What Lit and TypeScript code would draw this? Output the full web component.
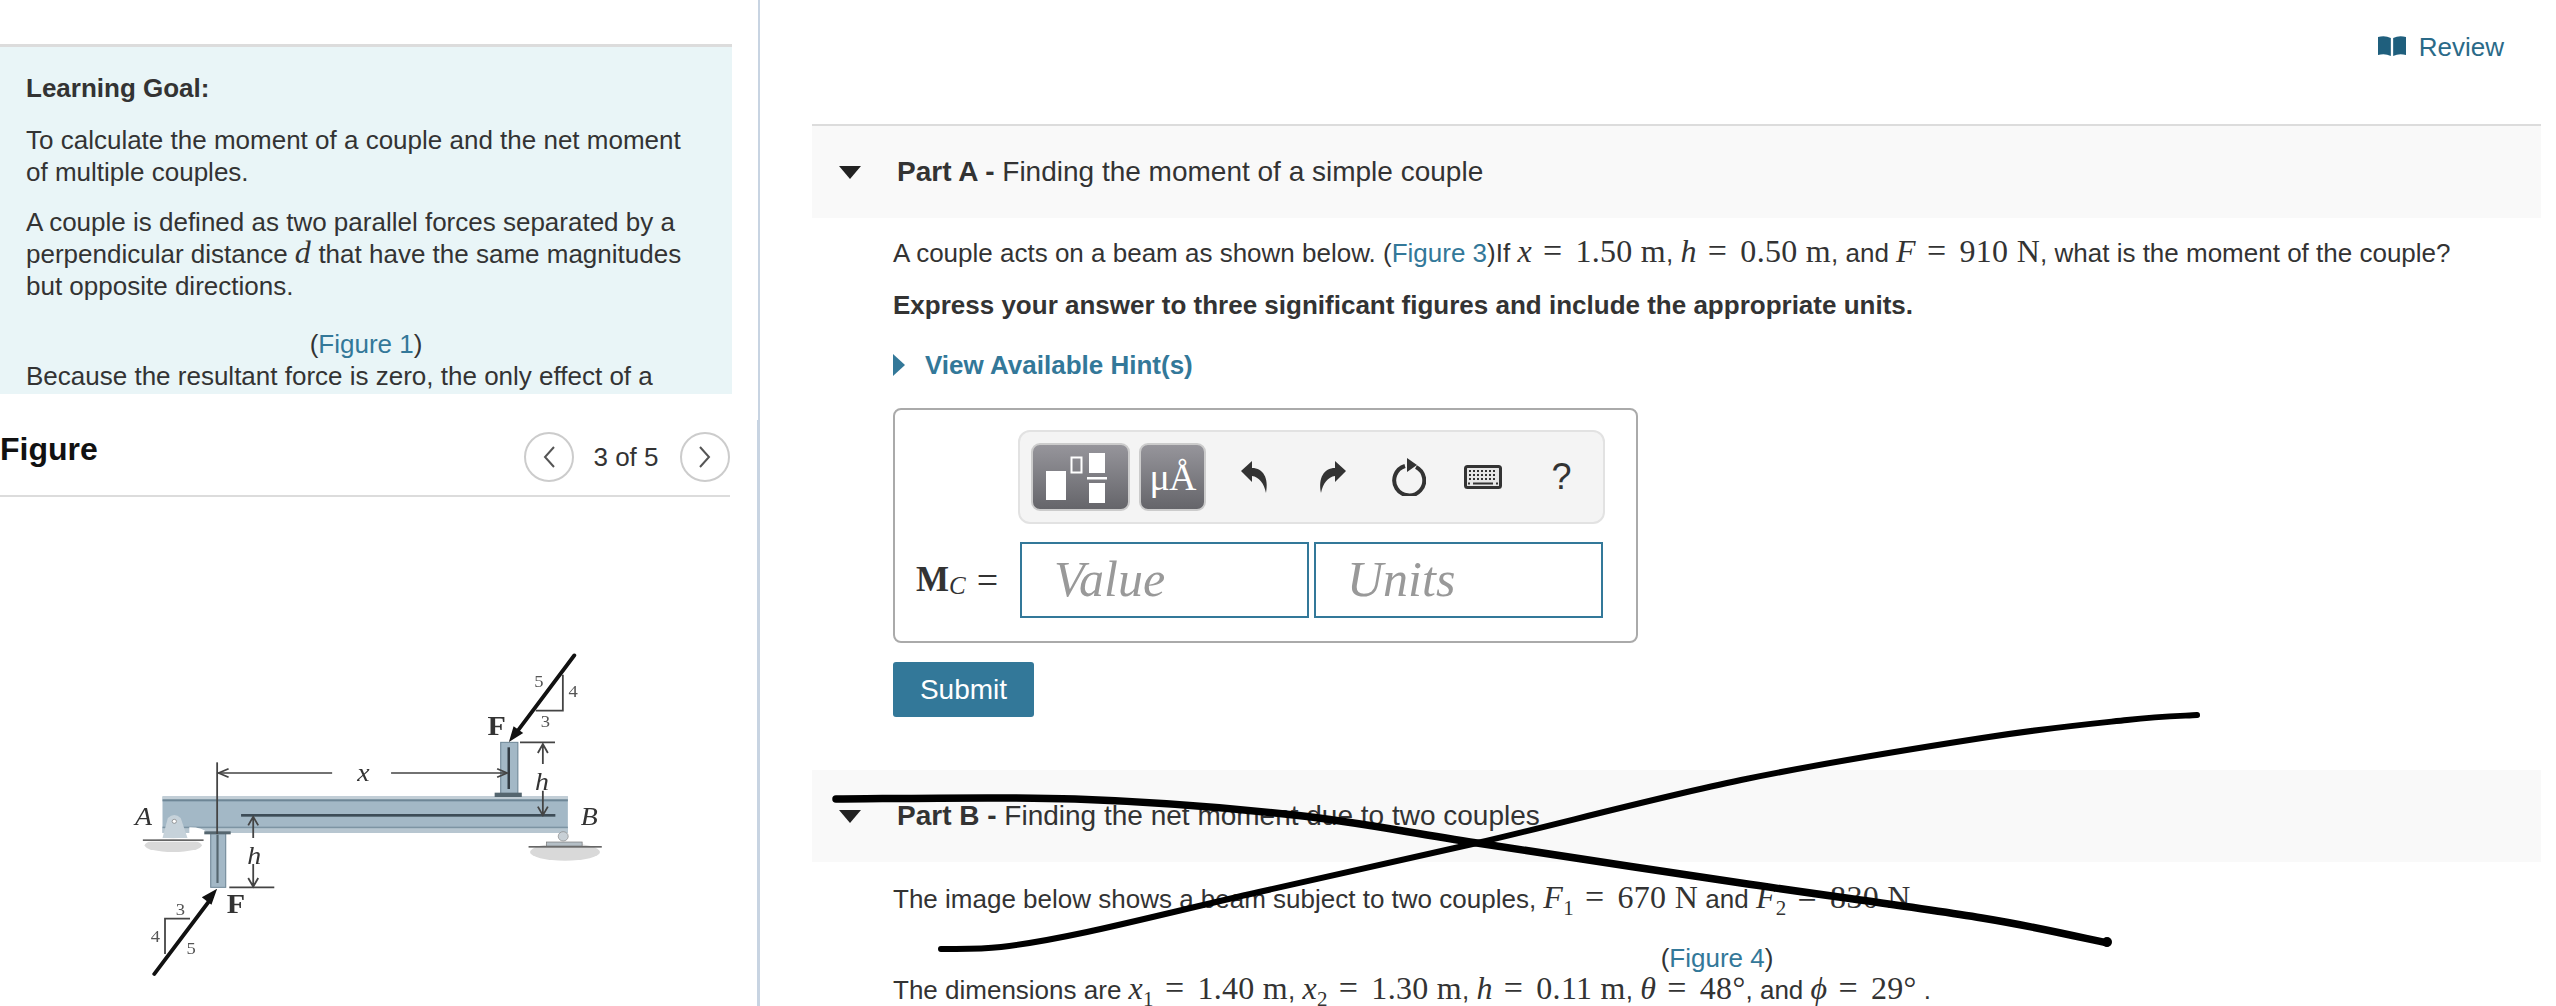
import { LitElement, html, css, svg } from "lit";
import { customElement } from "lit/decorators.js";

type P = [number, number];

function smooth(pts: P[]): string {
  let d = `M${pts[0][0]} ${pts[0][1]}`;
  for (let i = 0; i < pts.length - 1; i++) {
    const p0 = pts[Math.max(0, i - 1)];
    const p1 = pts[i];
    const p2 = pts[i + 1];
    const p3 = pts[Math.min(pts.length - 1, i + 2)];
    const c1x = p1[0] + (p2[0] - p0[0]) / 6;
    const c1y = p1[1] + (p2[1] - p0[1]) / 6;
    const c2x = p2[0] - (p3[0] - p1[0]) / 6;
    const c2y = p2[1] - (p3[1] - p1[1]) / 6;
    d += ` C${c1x} ${c1y} ${c2x} ${c2y} ${p2[0]} ${p2[1]}`;
  }
  return d;
}

const strokeA: P[] = [[836, 799], [1075, 799], [1294, 815], [1477, 843], [1741, 883], [1982, 918], [2107, 943]];
const strokeB: P[] = [[941, 949], [1001, 947], [1087, 932], [1259, 892], [1477, 843], [1741, 780], [1982, 738], [2127, 720], [2197, 715]];

const m = (s: string) => html`<span class="m">${s}</span>`;
const v = (s: string) => html`<i class="m">${s}</i>`;
const eq = html`<span class="m eq">=</span>`;

const diagram = svg`
  <ellipse cx="205" cy="682" rx="80" ry="20" fill="#d9d9d9"/>
  <ellipse cx="1302" cy="702" rx="98" ry="26" fill="#d9d9d9"/>
  <rect x="120" y="665" width="170" height="6" fill="#fff"/>
  <rect x="175" y="535" width="1135" height="110" fill="#a3b8c6"/>
  <rect x="175" y="535" width="1135" height="9" fill="#c2ced6"/>
  <rect x="175" y="544" width="1135" height="6" fill="#6e8696"/>
  <rect x="175" y="626" width="1135" height="5" fill="#7d94a3"/>
  <rect x="175" y="631" width="1135" height="14" fill="#b7c6d0"/>
  <path d="M175 660 L190 600 Q208 582 226 600 L245 660 Z" fill="#c6d2da"/>
  <circle cx="208" cy="610" r="6" fill="#fff" stroke="#777" stroke-width="2"/>
  <path d="M250 628 Q290 628 300 645 L250 645 Z" fill="#fff"/>
  <rect x="120" y="664" width="170" height="5" fill="#666"/>
  <rect x="1200" y="684" width="205" height="5" fill="#666"/>
  <rect x="1250" y="672" width="100" height="12" fill="#b5bfc6" stroke="#777" stroke-width="2"/>
  <circle cx="1297" cy="655" r="14" fill="#c8d0d6" stroke="#888" stroke-width="2"/>
  <rect x="395" y="588" width="880" height="8" fill="#3d4c57"/>
  <rect x="1122" y="373" width="48" height="155" fill="#a3b8c6" stroke="#6e8696" stroke-width="3"/>
  <rect x="1141" y="388" width="7" height="125" fill="#333c44"/>
  <rect x="1105" y="524" width="76" height="13" fill="#55666f"/>
  <rect x="310" y="645" width="42" height="163" fill="#a3b8c6" stroke="#6e8696" stroke-width="3"/>
  <rect x="326" y="650" width="6" height="145" fill="#55666f"/>
  <rect x="292" y="640" width="74" height="9" fill="#55666f"/>
  <g stroke="#444" stroke-width="5" fill="none">
    <path d="M328 433 V648"/>
    <path d="M330 465 H650 M815 465 H1140"/>
    <path d="M360 452 L332 465 L360 478 M1112 452 L1140 465 L1112 478"/>
    <path d="M1176 373 H1274 M362 808 H488"/>
    <path d="M1240 378 V438 M1240 518 V592 M1226 405 L1240 378 L1254 405 M1226 566 L1240 592 L1254 566"/>
    <path d="M429 596 V660 M429 738 V806 M415 622 L429 596 L443 622 M415 780 L429 806 L443 780"/>
    <path d="M1296 170 V278 H1220 M252 902 H182 V1008"/>
  </g>
  <g stroke="#111" stroke-width="11" fill="none" stroke-linecap="round">
    <path d="M1328 112 L1165 345"/>
    <path d="M152 1068 L305 850"/>
  </g>
  <path d="M1145 372 L1158 325 L1185 345 Z M328 812 L285 838 L312 860 Z" fill="#111"/>
  <g font-family="'Liberation Serif', serif" fill="#333">
    <text x="98" y="622" font-size="78" font-style="italic">A</text>
    <text x="1346" y="622" font-size="78" font-style="italic">B</text>
    <text x="720" y="488" font-size="78" font-style="italic">x</text>
    <text x="1218" y="516" font-size="78" font-style="italic">h</text>
    <text x="412" y="738" font-size="78" font-style="italic">h</text>
    <text x="1085" y="352" font-size="84" font-weight="700">F</text>
    <text x="355" y="886" font-size="84" font-weight="700">F</text>
    <text x="1216" y="206" font-size="52" fill="#555">5</text>
    <text x="1312" y="236" font-size="52" fill="#555">4</text>
    <text x="1234" y="328" font-size="52" fill="#555">3</text>
    <text x="212" y="892" font-size="52" fill="#555">3</text>
    <text x="142" y="972" font-size="52" fill="#555">4</text>
    <text x="242" y="1008" font-size="52" fill="#555">5</text>
  </g>
`;

@customElement("app-root")
export class AppRoot extends LitElement {
  static styles = css`
    :host {
      display: block;
      position: relative;
      width: 2556px;
      height: 1006px;
      overflow: hidden;
      background: #fff;
      font-family: "Liberation Sans", Arial, sans-serif;
      font-size: 26px;
      line-height: 32px;
      color: #333;
    }
    .page { display: flex; height: 1006px; }
    .left { width: 760px; flex: none; box-sizing: border-box; padding-top: 44px; position: relative; }
    .divider-top, .divider-bottom { position: absolute; right: 0; background: #c8d4e2; }
    .divider-top { top: 0; height: 420px; width: 2px; }
    .divider-bottom { top: 420px; bottom: 0; width: 3px; }
    .goal {
      width: 732px; height: 350px; box-sizing: border-box; overflow: hidden;
      border-top: 3px solid #dcdcdc; background: #e9f5f7; padding: 25px 26px 0;
    }
    .goal p { margin: 0 0 18px; }
    .goal .title { font-weight: 700; margin-bottom: 20px; }
    .goal .center { text-align: center; margin: 26px 0 0; }
    a { color: #337899; text-decoration: none; }
    .fig-head {
      width: 730px; height: 66px; margin-top: 37px; box-sizing: border-box;
      border-bottom: 2px solid #dcdcdc; display: flex; align-items: flex-start; justify-content: space-between;
    }
    .fig-title { font-size: 32px; font-weight: 700; color: #111; line-height: 36px; }
    .nav { display: flex; align-items: center; height: 50px; margin-top: 1px; }
    .circle {
      width: 50px; height: 50px; box-sizing: border-box; border: 2px solid #ccc; border-radius: 50%;
      display: flex; align-items: center; justify-content: center;
    }
    .count { width: 106px; text-align: center; padding-right: 2px; box-sizing: border-box; }
    .figure { padding: 121px 0 0 100px; }
    .figure svg { display: block; width: 560px; height: 386px; filter: blur(0.7px); }

    .right { flex: 1; padding: 0 15px 0 52px; min-width: 0; }
    .review {
      height: 124px; box-sizing: border-box; padding: 31px 37px 0 0; color: #2a6a88;
      display: flex; justify-content: flex-end; align-items: flex-start; gap: 13px;
    }
    .review svg { margin-top: 5px; }
    .part-head {
      background: #f9f9f9; height: 92px; box-sizing: border-box; padding: 0 0 0 27px;
      display: flex; align-items: center; gap: 36px; color: #333; font-size: 28px;
    }
    .part-head.first { border-top: 2px solid #dcdcdc; height: 94px; }
    .part-head b { font-weight: 700; }
    .body { padding-left: 81px; }
    .body p { margin: 0; white-space: nowrap; }
    .q { padding-top: 19px; }
    .q.second { padding-top: 21px; }
    .bold { font-weight: 700; margin-top: 20px !important; }
    .hint { margin-top: 28px !important; display: flex; align-items: center; gap: 20px; color: #337899; font-weight: 700; }
    .m { font-family: "Liberation Serif", "Times New Roman", serif; font-size: 32px; line-height: 0; letter-spacing: 0.3px; }
    .eq { margin: 0 13px 0 11px; font-size: 34px; }
    .m sub { font-size: 21px; line-height: 0; }
    .answer {
      margin-top: 27px; width: 745px; height: 235px; box-sizing: border-box;
      border: 2px solid #aaa; border-radius: 8px; padding: 20px 0 0 21px;
      display: grid; grid-template-columns: 102px 585px; grid-template-rows: 94px 76px; row-gap: 18px;
    }
    .toolbar {
      grid-column: 2; height: 94px; box-sizing: border-box; width: 587px;
      background: #f4f4f4; border: 2px solid #e2e2e2; border-radius: 12px;
      display: flex; align-items: center; padding: 0 0 0 11px;
    }
    .btn {
      height: 68px; box-sizing: border-box; border: 2px solid #ccc; border-radius: 9px;
      background: linear-gradient(#96959b, #65656a); display: flex; align-items: center; justify-content: center;
      color: #fff; font-family: "Liberation Serif", serif; font-size: 38px;
    }
    .btn.tpl { width: 99px; padding-right: 4px; }
    .btn.unit { width: 67px; margin-left: 9px; letter-spacing: -1px; }
    .tool { width: 77px; display: flex; justify-content: center; align-items: center; color: #333; }
    .tool.first { margin-left: 10px; }
    .tool.keys { margin-left: -3px; margin-right: 2px; }
    .qm { font-size: 36px; font-family: "Liberation Sans", sans-serif; }
    .label { display: flex; align-items: center; font-family: "Liberation Serif", serif; font-size: 35px; }
    .label b { font-weight: 700; }
    .label i { font-size: 25px; margin-top: 12px; }
    .label span { margin-left: 11px; font-size: 38px; }
    .inputs { display: flex; gap: 5px; margin-left: 2px; }
    .input {
      width: 290px; height: 76px; box-sizing: border-box; border: 2px solid #337899;
      font-family: "Liberation Serif", serif; font-style: italic; font-size: 50px; color: #999;
      line-height: 70px; padding-left: 32px;
    }
    .input.units { padding-left: 31px; }
    .submit {
      display: block; margin-top: 19px; width: 141px; height: 55px; background: #337899; color: #fff;
      border-radius: 3px; text-align: center; line-height: 56px; font-size: 28px;
    }
    .gap { height: 53px; }
    .fig4 { text-align: center; width: 100%; padding-right: 32px; margin-top: 27px !important; }
    .scribble { position: absolute; left: 0; top: 0; pointer-events: none; }
  `;

  render() {
    return html`
      <div class="page">
        <section class="left">
          <div class="divider-top"></div>
          <div class="divider-bottom"></div>
          <div class="goal">
            <p class="title">Learning Goal:</p>
            <p>To calculate the moment of a couple and the net moment of multiple couples.</p>
            <p>A couple is defined as two parallel forces separated by a perpendicular distance ${v("d")} that have the same magnitudes but opposite directions.</p>
            <p class="center">(<a>Figure 1</a>)</p>
            <p>Because the resultant force is zero, the only effect of a</p>
          </div>
          <div class="fig-head">
            <div class="fig-title">Figure</div>
            <div class="nav">
              <div class="circle"><svg width="14" height="24" viewBox="0 0 14 24"><path d="M12 2 L3 12 L12 22" fill="none" stroke="#555" stroke-width="2"/></svg></div>
              <div class="count">3 of 5</div>
              <div class="circle"><svg width="14" height="24" viewBox="0 0 14 24"><path d="M2 2 L11 12 L2 22" fill="none" stroke="#555" stroke-width="2"/></svg></div>
            </div>
          </div>
          <div class="figure">
            <svg viewBox="0 0 1568 1158" preserveAspectRatio="none">${diagram}</svg>
          </div>
        </section>
        <section class="right">
          <div class="review">
            <svg width="28" height="20" viewBox="0 0 24 20" preserveAspectRatio="none"><path d="M0 1 Q6 -1 11 2 V20 Q6 17 0 19 Z M13 2 Q18 -1 24 1 V19 Q18 17 13 20 Z" fill="#1f5f7d"/></svg>
            <span>Review</span>
          </div>
          <div class="part-head first">
            <svg width="22" height="13" viewBox="0 0 22 13"><path d="M0 0 H22 L11 13 Z" fill="#222"/></svg>
            <span><b>Part A -</b> Finding the moment of a simple couple</span>
          </div>
          <div class="body">
            <p class="q">A couple acts on a beam as shown below. (<a>Figure 3</a>)If ${v("x")}${eq}${m("1.50 m")}, ${v("h")}${eq}${m("0.50 m")}, and ${v("F")}${eq}${m("910 N")}, what is the moment of the couple?</p>
            <p class="bold">Express your answer to three significant figures and include the appropriate units.</p>
            <p class="hint"><svg width="12" height="22" viewBox="0 0 12 22"><path d="M0 0 L12 11 L0 22 Z" fill="#337899"/></svg><span>View Available Hint(s)</span></p>
            <div class="answer">
              <div class="toolbar">
                <div class="btn tpl">
                  <svg width="66" height="52" viewBox="0 0 66 52" fill="#fff"><rect x="0" y="20" width="20" height="29"/><rect x="25.5" y="6.5" width="10" height="15" fill="none" stroke="#fff" stroke-width="2"/><rect x="43" y="2" width="16" height="20"/><rect x="41" y="26" width="20" height="2.5"/><rect x="43" y="32" width="16" height="20"/></svg>
                </div>
                <div class="btn unit">μÅ</div>
                <div class="tool first"><svg width="28" height="32" viewBox="0 0 28 32"><path d="M0 10 L11 0 V7 C22 7 28 17 25 32 C23 22 18 16 11 15 V21 Z" fill="#333"/></svg></div>
                <div class="tool"><svg width="28" height="32" viewBox="0 0 28 32"><path d="M28 10 L17 0 V7 C6 7 0 17 3 32 C5 22 10 16 17 15 V21 Z" fill="#333"/></svg></div>
                <div class="tool"><svg width="34" height="38" viewBox="0 0 34 38"><path d="M13 8 A15 15 0 1 0 24 9" fill="none" stroke="#333" stroke-width="4"/><path d="M15 0 L25 7 L15 14 Z" fill="#333"/></svg></div>
                <div class="tool keys"><svg width="38" height="24" viewBox="0 0 38 24"><rect x="1.5" y="1.5" width="35" height="21" rx="2" fill="#e6e6e6" stroke="#333" stroke-width="3"/><g fill="none" stroke="#333" stroke-width="2" stroke-dasharray="2 2"><path d="M5 6 H33 M5 10 H33 M5 14 H33"/></g><path d="M9 18.5 H29 M4 18.5 H6 M32 18.5 H34" stroke="#333" stroke-width="2"/></svg></div>
                <div class="tool qm">?</div>
              </div>
              <div class="label"><b>M</b><i>C</i><span>=</span></div>
              <div class="inputs">
                <div class="input">Value</div>
                <div class="input units">Units</div>
              </div>
            </div>
            <a class="submit">Submit</a>
          </div>
          <div class="gap"></div>
          <div class="part-head">
            <svg width="22" height="13" viewBox="0 0 22 13"><path d="M0 0 H22 L11 13 Z" fill="#222"/></svg>
            <span><b>Part B -</b> Finding the net moment due to two couples</span>
          </div>
          <div class="body">
            <p class="q second">The image below shows a beam subject to two couples, <span class="m"><i>F</i><sub>1</sub></span>${eq}${m("670 N")} and <span class="m"><i>F</i><sub>2</sub></span>${eq}${m("830 N")}.</p>
            <p class="fig4">(<a>Figure 4</a>)</p>
            <p>The dimensions are <span class="m"><i>x</i><sub>1</sub></span>${eq}${m("1.40 m")}, <span class="m"><i>x</i><sub>2</sub></span>${eq}${m("1.30 m")}, ${v("h")}${eq}${m("0.11 m")}, ${v("θ")}${eq}${m("48°")}, and ${v("ϕ")}${eq}${m("29°")} .</p>
          </div>
        </section>
      </div>
      <svg class="scribble" width="2556" height="1006" viewBox="0 0 2556 1006" fill="none" stroke="#000" stroke-linecap="round">
        <path d=${smooth(strokeA)} stroke-width="7.5"/>
        <path d=${smooth(strokeB)} stroke-width="6"/>
        <circle cx="2107" cy="942" r="5" fill="#000" stroke="none"/>
      </svg>
    `;
  }
}
